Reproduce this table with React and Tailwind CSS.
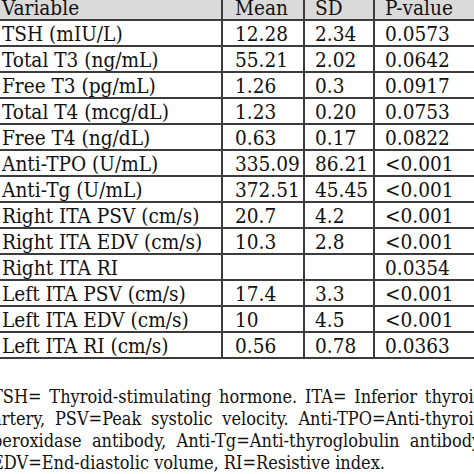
const rows = [
  ['TSH (mIU/L)', '12.28', '2.34', '0.0573'],
  ['Total T3 (ng/mL)', '55.21', '2.02', '0.0642'],
  ['Free T3 (pg/mL)', '1.26', '0.3', '0.0917'],
  ['Total T4 (mcg/dL)', '1.23', '0.20', '0.0753'],
  ['Free T4 (ng/dL)', '0.63', '0.17', '0.0822'],
  ['Anti-TPO (U/mL)', '335.09', '86.21', '<0.001'],
  ['Anti-Tg (U/mL)', '372.51', '45.45', '<0.001'],
  ['Right ITA PSV (cm/s)', '20.7', '4.2', '<0.001'],
  ['Right ITA EDV (cm/s)', '10.3', '2.8', '<0.001'],
  ['Right ITA RI', '', '', '0.0354'],
  ['Left ITA PSV (cm/s)', '17.4', '3.3', '<0.001'],
  ['Left ITA EDV (cm/s)', '10', '4.5', '<0.001'],
  ['Left ITA RI (cm/s)', '0.56', '0.78', '0.0363']
];

const footnote = [
  'TSH= Thyroid-stimulating hormone. ITA= Inferior thyroid',
  'artery, PSV=Peak systolic velocity. Anti-TPO=Anti-thyroid',
  'peroxidase antibody, Anti-Tg=Anti-thyroglobulin antibody,'
];

function Row({ cells, header }) {
  return (
    <div
      className={`grid h-[26px] grid-cols-[230px_82px_70px_1fr] border-b-2 border-[#3c3c3c] leading-[24px] ${
        header ? 'bg-[#dadada]' : 'bg-white'
      }`}
    >
      <div className="whitespace-nowrap pl-[11px] pt-px">{cells[0]}</div>
      <div className="whitespace-nowrap border-l-2 border-[#3c3c3c] pl-[12px] pt-px">{cells[1]}</div>
      <div className="whitespace-nowrap border-l-2 border-[#3c3c3c] pl-[10px] pt-px">{cells[2]}</div>
      <div className="whitespace-nowrap border-l-2 border-[#3c3c3c] pl-[10px] pt-px">{cells[3]}</div>
    </div>
  );
}

export default function App() {
  return (
    <div className="h-[474px] w-[474px] overflow-hidden bg-white [font-family:'DejaVu_Serif_Condensed','DejaVu_Serif',serif] text-[#111]">
      <div className="-mt-[5px] ml-[-9px] w-[520px] text-[20.6px]">
        <Row header cells={['Variable', 'Mean', 'SD', 'P-value']} />
        {rows.map((r) => (
          <Row key={r[0]} cells={r} />
        ))}
      </div>
      <div className="ml-[-8px] mt-[27px] w-[492px] text-[18px] leading-[22px]">
        {footnote.map((line) => (
          <div key={line} className="whitespace-nowrap text-justify [text-align-last:justify]">
            {line}
          </div>
        ))}
        <div className="whitespace-nowrap">EDV=End-diastolic volume, RI=Resistive index.</div>
      </div>
    </div>
  );
}
